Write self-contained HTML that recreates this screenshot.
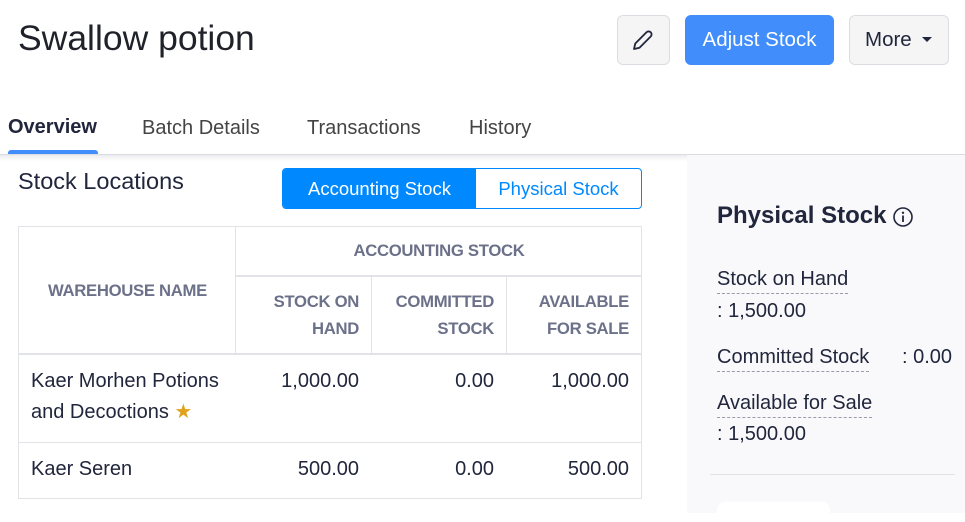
<!DOCTYPE html>
<html><head><meta charset="utf-8"><style>
*{box-sizing:border-box;margin:0;padding:0}
body{width:965px;height:513px;overflow:hidden;background:#fff;font-family:"Liberation Sans",sans-serif;color:#21263c;position:relative}
.a{position:absolute;white-space:nowrap}
.h{font-size:16.7px;font-weight:bold;color:#6c718a;letter-spacing:-0.3px}
.t{font-size:20px;color:#21263c}
.dl{border-bottom:1px dashed #9a9cab;padding-bottom:2px}
</style></head><body>
<div class="a" style="left:18px;top:18px;font-size:35.5px;color:#1f2229">Swallow potion</div>
<div class="a" style="left:617px;top:15px;width:53px;height:50px;border:1px solid #dcdde2;border-radius:6px;background:#f5f5f6"></div>
<svg class="a" style="left:631px;top:28px" width="24" height="24" viewBox="0 0 24 24"><path d="M3 21 L4.3 15.5 L15.5 4.3 a2.6 2.6 0 0 1 4.2 4.2 L8.5 19.7 Z" fill="none" stroke="#21263c" stroke-width="1.8" stroke-linejoin="round"/></svg>
<div class="a" style="left:685px;top:15px;width:149px;height:50px;border-radius:6px;background:#408dfb;color:#fff;font-size:20.5px;text-align:center;line-height:50px">Adjust Stock</div>
<div class="a" style="left:849px;top:15px;width:100px;height:50px;border:1px solid #dcdde2;border-radius:6px;background:#f5f5f6;font-size:20.5px;line-height:48px;padding-left:15px">More</div>
<div class="a" style="left:922px;top:37px;width:0;height:0;border-left:5px solid transparent;border-right:5px solid transparent;border-top:5px solid #21263c"></div>

<div class="a" style="left:8px;top:116px;font-size:20px;font-weight:bold;color:#21263c">Overview</div>
<div class="a" style="left:142px;top:117px;font-size:20px;color:#444">Batch Details</div>
<div class="a" style="left:307px;top:117px;font-size:20px;color:#444">Transactions</div>
<div class="a" style="left:469px;top:117px;font-size:20px;color:#444">History</div>
<div class="a" style="left:8px;top:150px;width:90px;height:5px;background:#408dfb;border-radius:3px 3px 0 0"></div>
<div class="a" style="left:0;top:154px;width:965px;height:1px;background:#dcdde2"></div>
<div class="a" style="left:0;top:155px;width:687px;height:6px;background:linear-gradient(#ececef,#fff)"></div>
<div class="a" style="left:687px;top:155px;width:278px;height:358px;background:#f9f9fb"></div>

<div class="a" style="left:18px;top:168px;font-size:23.5px;color:#21263c">Stock Locations</div>
<div class="a" style="left:282px;top:168px;width:360px;height:41px;border:1px solid #0089ff;border-radius:4px;overflow:hidden">
<div class="a" style="left:0;top:0;width:193px;height:39px;background:#0089ff;color:#fff;font-size:18.5px;line-height:39px;text-align:center">Accounting Stock</div>
<div class="a" style="left:193px;top:0;width:165px;height:39px;color:#0089ff;font-size:18.5px;line-height:39px;text-align:center">Physical Stock</div>
</div>

<div class="a" style="left:18px;top:226px;width:624px;height:273px;border:1px solid #e2e3e7"></div>
<div class="a" style="left:235px;top:226px;width:1px;height:128px;background:#e2e3e7"></div>
<div class="a" style="left:235px;top:275px;width:407px;height:2px;background:#e2e3e7"></div>
<div class="a" style="left:371px;top:276px;width:1px;height:78px;background:#e2e3e7"></div>
<div class="a" style="left:506px;top:276px;width:1px;height:78px;background:#e2e3e7"></div>
<div class="a" style="left:18px;top:353px;width:624px;height:2px;background:#e2e3e7"></div>
<div class="a" style="left:18px;top:442px;width:624px;height:1px;background:#e2e3e7"></div>

<div class="a h" style="left:48px;top:281px">WAREHOUSE NAME</div>
<div class="a h" style="left:236px;top:241px;width:406px;text-align:center">ACCOUNTING STOCK</div>
<div class="a h" style="left:236px;top:288px;width:123px;text-align:right;line-height:27px">STOCK ON<br>HAND</div>
<div class="a h" style="left:372px;top:288px;width:122px;text-align:right;line-height:27px">COMMITTED<br>STOCK</div>
<div class="a h" style="left:507px;top:288px;width:122px;text-align:right;line-height:27px">AVAILABLE<br>FOR SALE</div>

<div class="a t" style="left:31px;top:366px;line-height:31px">Kaer Morhen Potions<br>and Decoctions <span style="color:#e0a21c">★</span></div>
<div class="a t" style="left:236px;top:370px;width:123px;text-align:right">1,000.00</div>
<div class="a t" style="left:372px;top:370px;width:122px;text-align:right">0.00</div>
<div class="a t" style="left:507px;top:370px;width:122px;text-align:right">1,000.00</div>
<div class="a t" style="left:31px;top:458px">Kaer Seren</div>
<div class="a t" style="left:236px;top:458px;width:123px;text-align:right">500.00</div>
<div class="a t" style="left:372px;top:458px;width:122px;text-align:right">0.00</div>
<div class="a t" style="left:507px;top:458px;width:122px;text-align:right">500.00</div>

<div class="a" style="left:717px;top:202px;font-size:24px;font-weight:bold">Physical Stock</div>
<svg class="a" style="left:892px;top:206px" width="22" height="22" viewBox="0 0 22 22"><circle cx="11" cy="11" r="9" fill="none" stroke="#21263c" stroke-width="1.6"/><circle cx="11" cy="6.8" r="1.2" fill="#21263c"/><path d="M11 9.5V16" stroke="#21263c" stroke-width="1.8"/></svg>
<div class="a t dl" style="left:717px;top:268px">Stock on Hand</div>
<div class="a t" style="left:717px;top:300px">: 1,500.00</div>
<div class="a t dl" style="left:717px;top:346px">Committed Stock</div>
<div class="a t" style="left:902px;top:346px">: 0.00</div>
<div class="a t dl" style="left:717px;top:392px">Available for Sale</div>
<div class="a t" style="left:717px;top:423px">: 1,500.00</div>
<div class="a" style="left:710px;top:474px;width:245px;height:1px;background:#e2e3e7"></div>
<div class="a" style="left:717px;top:502px;width:113px;height:20px;background:#fff;border-radius:8px"></div>
</body></html>
